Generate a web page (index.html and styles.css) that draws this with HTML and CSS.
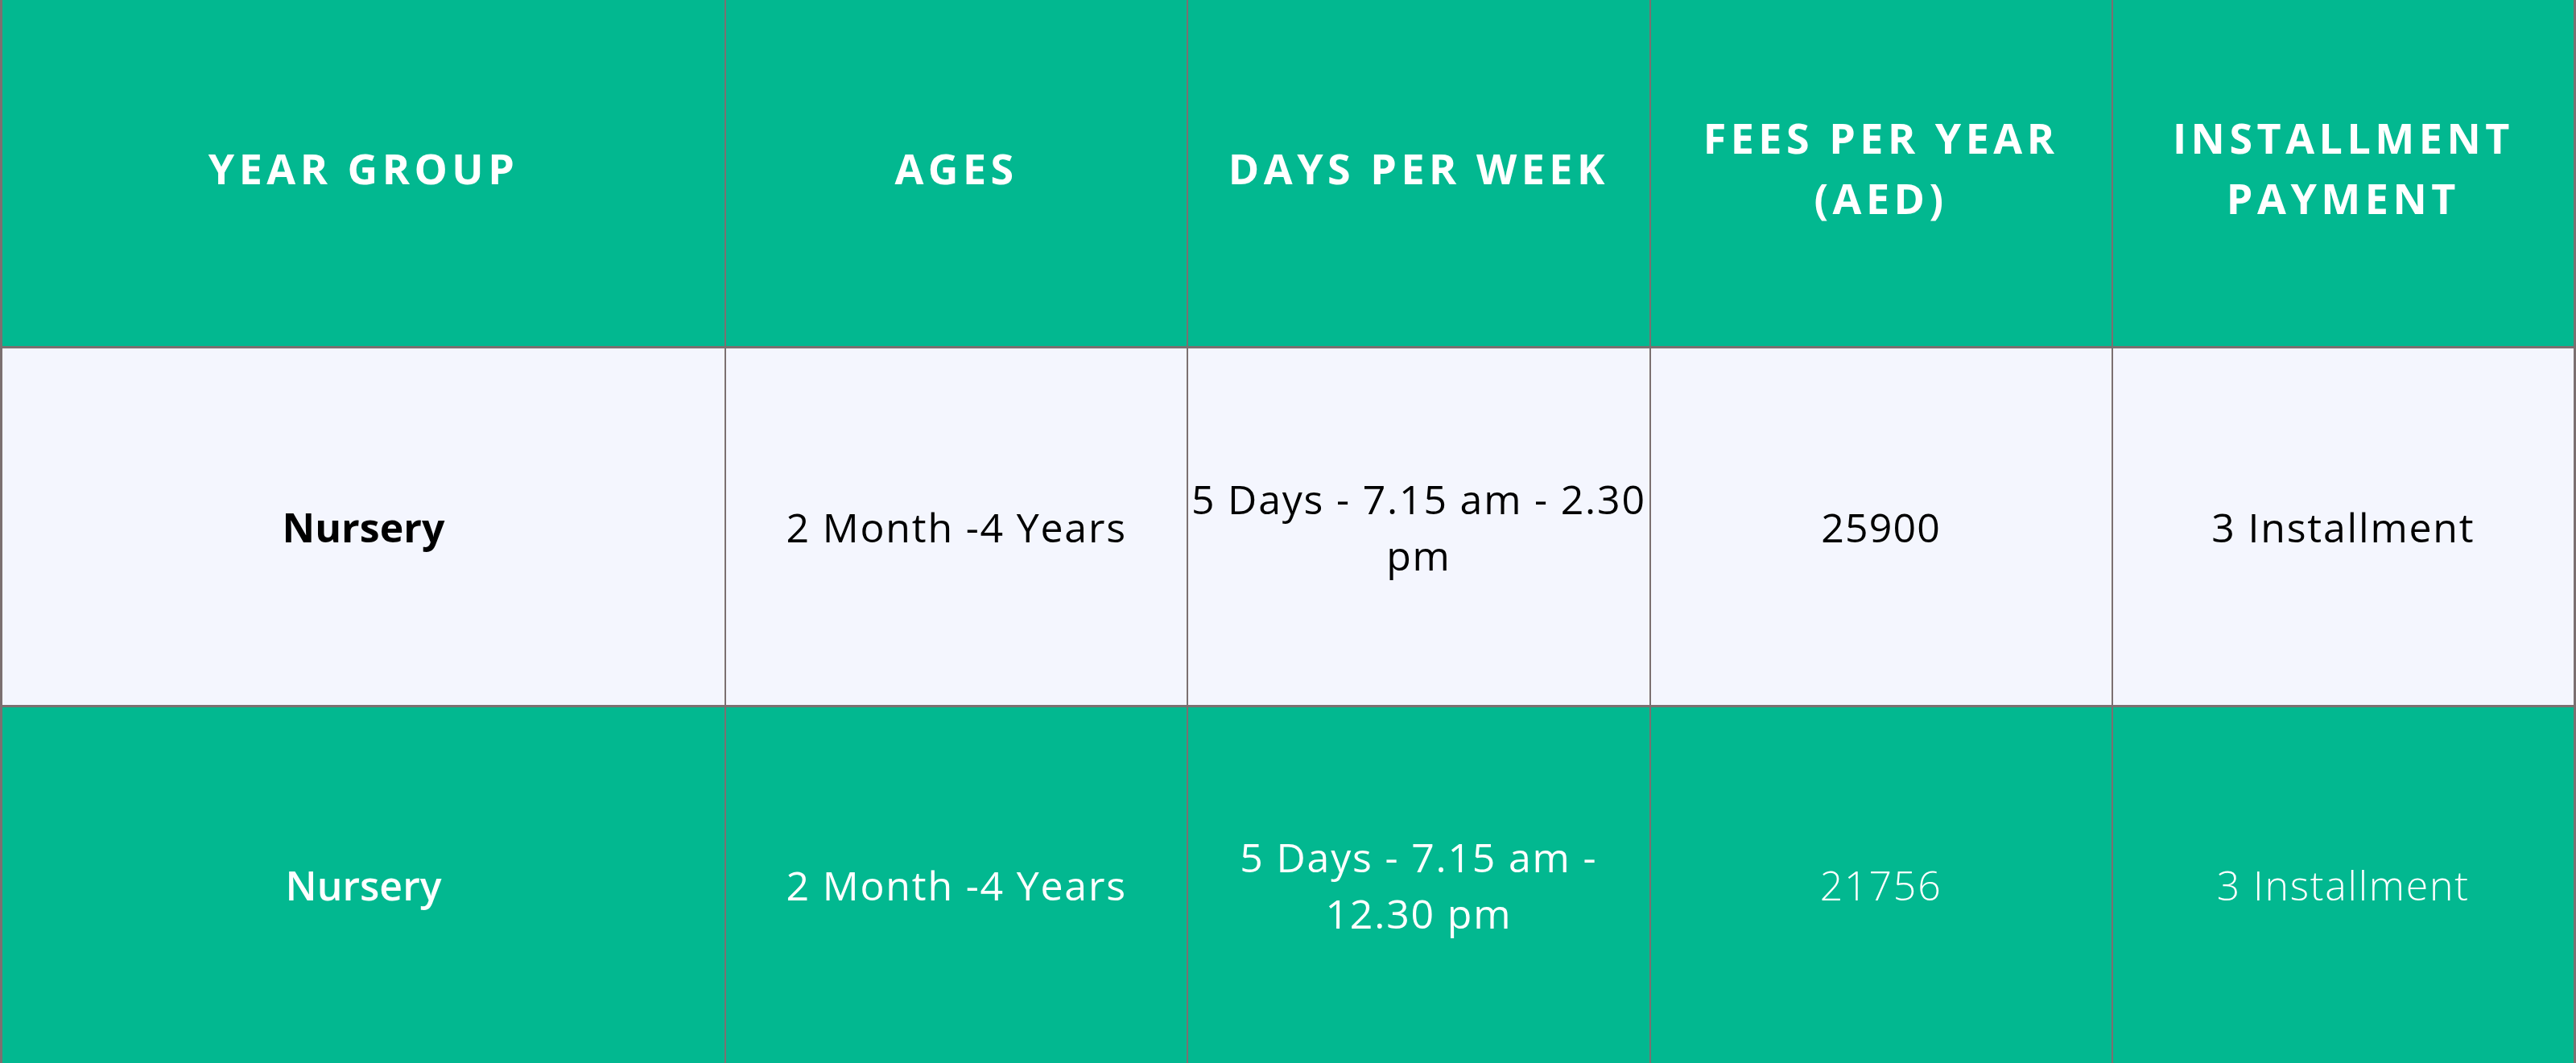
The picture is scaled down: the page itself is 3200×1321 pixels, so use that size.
FILE: index.html
```html
<!DOCTYPE html>
<html lang="en">
<head>
<meta charset="utf-8">
<title>Fees</title>
<link rel="stylesheet" href="styles.css">
</head>
<body>
<div class="fees-table">
  <div class="cell head"><span>Year Group</span></div>
  <div class="cell head"><span>Ages</span></div>
  <div class="cell head"><span>Days per week</span></div>
  <div class="cell head"><span>Fees per year (AED)</span></div>
  <div class="cell head"><span>Installment Payment</span></div>

  <div class="cell light"><span class="w-bold">Nursery</span></div>
  <div class="cell light"><span class="w-regular">2 Month -4 Years</span></div>
  <div class="cell light"><span class="w-regular">5 Days - 7.15 am - 2.30<br>pm</span></div>
  <div class="cell light"><span class="w-medium">25900</span></div>
  <div class="cell light"><span class="w-regular">3 Installment</span></div>

  <div class="cell green"><span class="w-semibold">Nursery</span></div>
  <div class="cell green"><span class="w-regular">2 Month -4 Years</span></div>
  <div class="cell green"><span class="w-regular">5 Days - 7.15 am -<br>12.30 pm</span></div>
  <div class="cell green"><span class="w-light">21756</span></div>
  <div class="cell green"><span class="w-light">3 Installment</span></div>
</div>
</body>
</html>
```
FILE: styles.css
```css
html, body {
  margin: 0;
  padding: 0;
  background: #02b890;
}

.fees-table {
  width: 3200px;
  height: 1321px;
  box-sizing: border-box;
  display: grid;
  grid-template-columns: 897px repeat(4, 1fr);
  grid-template-rows: 430px 443px 1fr;
  gap: 3px 2px;
  padding: 0 3px;
  background: #7b7070;
  font-family: "Open Sans", "Noto Sans", sans-serif;
}

.cell {
  display: flex;
  align-items: center;
  justify-content: center;
  text-align: center;
}

.head {
  background: #02b890;
  color: #ffffff;
  font-weight: 700;
  font-size: 52px;
  line-height: 75px;
  letter-spacing: 5.5px;
  text-transform: uppercase;
  padding: 0 30px 14px;
}

.light {
  background: #f4f6fe;
  color: #000000;
  font-size: 50px;
  line-height: 70px;
}

.green {
  background: #02b890;
  color: #ffffff;
  font-size: 50px;
  line-height: 70px;
}

.w-light { font-weight: 300; letter-spacing: 1.8px; }
.w-regular { font-weight: 400; letter-spacing: 1.8px; }
.w-medium { font-weight: 500; letter-spacing: 1.2px; }
.w-semibold { font-weight: 600; }
.w-bold { font-weight: 700; }
```
